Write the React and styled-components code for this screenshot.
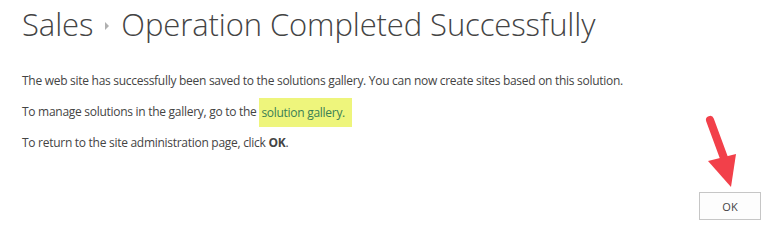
import React from "react";
import styled, { createGlobalStyle } from "styled-components";

const GlobalStyle = createGlobalStyle`
  html, body {
    margin: 0;
    padding: 0;
    background: #ffffff;
  }
  body {
    font-family: "Open Sans", "Liberation Sans", sans-serif;
    color: #444444;
  }
`;

const Page = styled.div`
  position: relative;
  width: 768px;
  height: 232px;
  overflow: hidden;
  padding: 4px 0 0 22px;
  box-sizing: border-box;
`;

const Title = styled.h1`
  margin: 0;
  display: flex;
  align-items: center;
  gap: 12px;
  font-size: 31px;
  font-weight: 300;
  color: #444444;
  line-height: 40px;
  letter-spacing: -0.1px;
`;

const Crumb = styled.span`
  width: 0;
  height: 0;
  border-top: 4px solid transparent;
  border-bottom: 4px solid transparent;
  border-left: 4px solid #b0b0b0;
  margin-top: 4px;
`;

const Body = styled.div`
  margin-top: 21px;
  display: flex;
  flex-direction: column;
`;

const Line = styled.p`
  margin: 0;
  font-size: 12px;
  letter-spacing: -0.28px;
  line-height: 31px;
  color: #444444;
`;

const Highlight = styled.a`
  display: inline-block;
  height: 29px;
  line-height: 29px;
  background: #eef57c;
  color: #3a7f55;
  text-decoration: none;
  padding: 0 7px 0 2px;
  vertical-align: middle;
`;

const Footer = styled.div`
  display: flex;
  justify-content: flex-end;
  padding-right: 7px;
  margin-top: 34px;
`;

const Button = styled.button`
  position: relative;
  width: 62px;
  height: 28px;
  border: 1px solid #c6c6c6;
  background: #fdfdfd;
  font-family: "Open Sans", "Liberation Sans", sans-serif;
  font-size: 11px;
  color: #444444;
  padding: 0;
`;

const Arrow = styled.svg`
  position: absolute;
  right: 22px;
  bottom: 31px;
`;

export default function App() {
  return (
    <>
      <GlobalStyle />
      <Page>
        <Title>
          <span>Sales</span>
          <Crumb />
          <span>Operation Completed Successfully</span>
        </Title>
        <Body>
          <Line>
            The web site has successfully been saved to the solutions gallery. You can now create sites based on this solution.
          </Line>
          <Line>
            To manage solutions in the gallery, go to the <Highlight href="#">solution gallery.</Highlight>
          </Line>
          <Line>
            To return to the site administration page, click <b>OK</b>.
          </Line>
        </Body>
        <Footer>
          <Button>
            OK
            <Arrow width="34" height="76" viewBox="0 0 34 76">
              <line x1="6" y1="8" x2="20" y2="46" stroke="#f2404a" strokeWidth="8" strokeLinecap="round" />
              <polygon points="4,49 32,42 27,75" fill="#f2404a" />
            </Arrow>
          </Button>
        </Footer>
      </Page>
    </>
  );
}
